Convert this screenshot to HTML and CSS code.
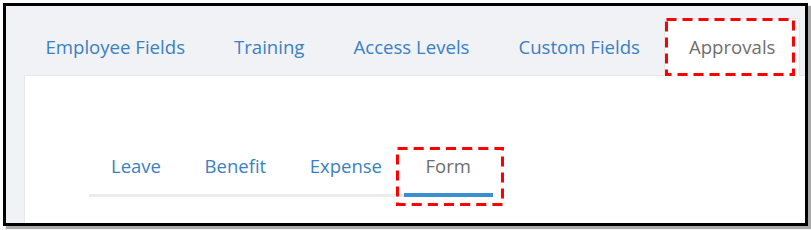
FILE: index.html
```html
<!DOCTYPE html>
<html lang="en">
<head>
    <meta charset="UTF-8">
    <meta name="viewport" content="width=device-width, initial-scale=1.0">
    <title>Approvals - Form</title>
    <link rel="stylesheet" href="styles.css">
</head>
<body>

    <div class="frame">
        <!-- Top level tabs -->
        <nav class="tabs">
            <a class="tab">Employee Fields</a>
            <a class="tab">Training</a>
            <a class="tab">Access Levels</a>
            <a class="tab">Custom Fields</a>
            <a class="tab active">Approvals
                <svg class="mark" viewBox="0 0 130 58" preserveAspectRatio="none">
                    <rect x="1.5" y="1.5" width="127" height="55" />
                </svg>
            </a>
        </nav>

        <!-- Tab content -->
        <div class="panel">
            <nav class="subtabs">
                <a class="subtab">Leave</a>
                <a class="subtab">Benefit</a>
                <a class="subtab">Expense</a>
                <a class="subtab active">Form
                    <svg class="mark mark-form" viewBox="0 0 107 59" preserveAspectRatio="none">
                        <rect x="1.5" y="1.5" width="104" height="56" />
                    </svg>
                </a>
            </nav>
        </div>
    </div>

</body>
</html>
```

FILE: styles.css
```css
* {
    margin: 0;
    padding: 0;
    box-sizing: border-box;
    font-family: "Open Sans", Arial, sans-serif;
}

body {
    background-color: #fff;
    width: 811px;
    height: 230px;
    overflow: hidden;
}

.frame {
    margin: 3px 0 0 3px;
    width: 805px;
    height: 223px;
    border: 3px solid #000;
    background-color: #f1f2f6;
    box-shadow: 3px 3px 1px #a9a9a9;
    display: flex;
    flex-direction: column;
    overflow: hidden;
}

/* Top tabs */
.tabs {
    display: flex;
    padding: 12px 0 0 15px;
}

.tab {
    position: relative;
    padding: 16px 23.5px 16px;
    font-size: 18.6px;
    line-height: 24px;
    color: #3a80c3;
    cursor: pointer;
    border: 1px solid transparent;
    border-bottom: none;
}

.tab.active {
    color: #6e6e6e;
    background-color: #fff;
    border-color: #e6e8ec;
    border-radius: 4px 4px 0 0;
    margin-bottom: -1px;
    z-index: 1;
}

/* Red dashed annotation boxes */
.mark {
    position: absolute;
    left: 0;
    top: -1px;
    width: 130px;
    height: 58px;
    overflow: visible;
}

.mark rect {
    fill: none;
    stroke: #f00;
    stroke-width: 3;
    stroke-dasharray: 10 6;
}

.mark-form {
    left: -8px;
    top: 5px;
    width: 108px;
    height: 59px;
}

/* Content panel */
.panel {
    flex: 1;
    margin-left: 18px;
    background-color: #fff;
    border-top: 1px solid #e6e8ec;
    border-left: 1px solid #e6e8ec;
    padding: 66px 0 0 64px;
}

.subtabs {
    display: flex;
    width: 403px;
    border-bottom: 3px solid #ececec;
}

.subtab {
    position: relative;
    padding: 12px 21.8px 15px;
    font-size: 18.5px;
    line-height: 24px;
    color: #3a80c3;
    cursor: pointer;
}

.subtab:first-child {
    padding-left: 22px;
}

.subtab.active {
    color: #6e6e6e;
    border-bottom: 4px solid #3a8fd3;
    margin-bottom: -3px;
}
```
